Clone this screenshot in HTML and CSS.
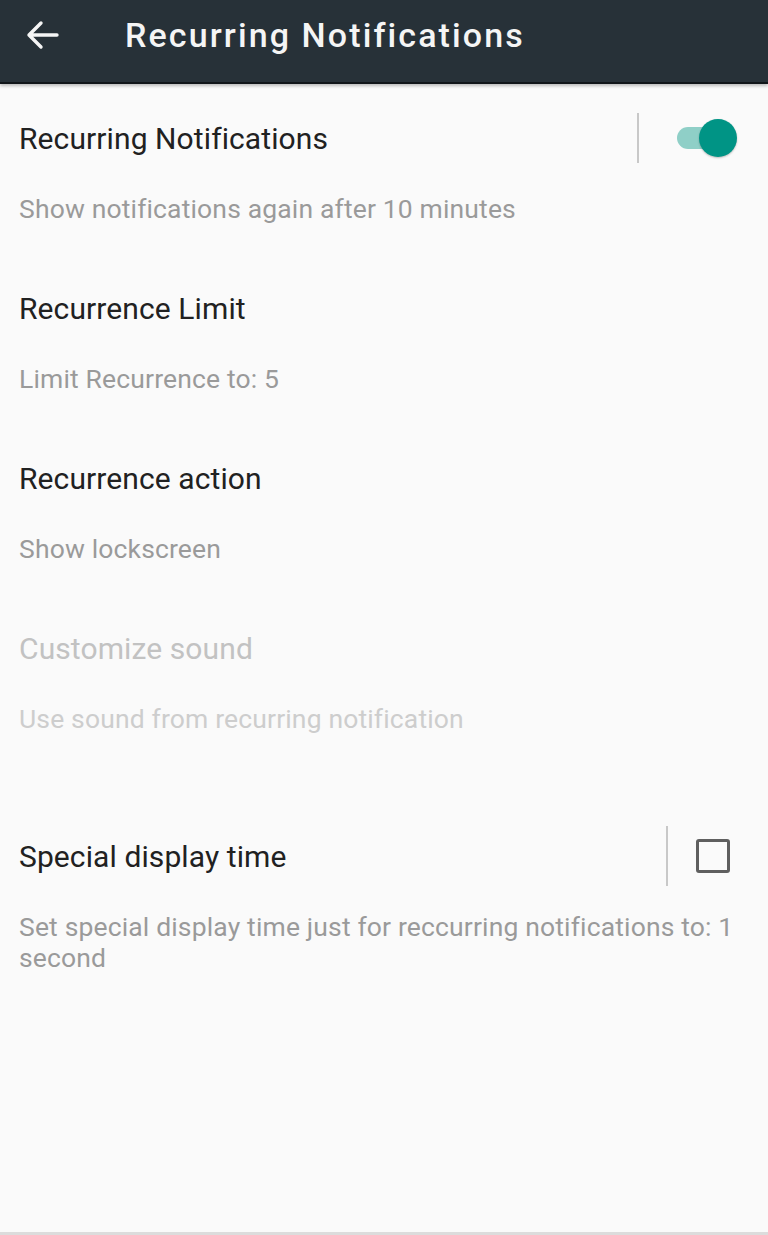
FILE: index.html
```html
<!DOCTYPE html>
<html lang="en">
<head>
  <meta charset="UTF-8" />
  <meta name="viewport" content="width=device-width, initial-scale=1.0"/>
  <title>Recurring Notifications</title>

  <link rel="stylesheet" href="styles.css">
</head>
<body>

  <header class="toolbar">
    <span class="back-btn">
      <svg width="34" height="30" viewBox="0 0 34 30">
        <path d="M32 15H4M16 3L4 15l12 12" fill="none" stroke="#f5f5f5" stroke-width="3.4" stroke-linecap="round" stroke-linejoin="round"/>
      </svg>
    </span>
    <h1 class="toolbar-title">Recurring Notifications</h1>
  </header>

  <main class="prefs">
    <div class="pref">
      <div class="pref-head">
        <div class="pref-title">Recurring Notifications</div>
        <div class="pref-widget">
          <span class="divider"></span>
          <span class="switch on"><span class="thumb"></span></span>
        </div>
      </div>
      <div class="pref-summary">Show notifications again after 10 minutes</div>
    </div>

    <div class="pref">
      <div class="pref-head">
        <div class="pref-title">Recurrence Limit</div>
      </div>
      <div class="pref-summary">Limit Recurrence to: 5</div>
    </div>

    <div class="pref">
      <div class="pref-head">
        <div class="pref-title">Recurrence action</div>
      </div>
      <div class="pref-summary">Show lockscreen</div>
    </div>

    <div class="pref disabled">
      <div class="pref-head">
        <div class="pref-title">Customize sound</div>
      </div>
      <div class="pref-summary">Use sound from recurring notification</div>
    </div>

    <div class="pref spaced">
      <div class="pref-head">
        <div class="pref-title">Special display time</div>
        <div class="pref-widget check-widget">
          <span class="divider tall"></span>
          <span class="checkbox"></span>
        </div>
      </div>
      <div class="pref-summary">Set special display time just for reccurring notifications to: 1 second</div>
    </div>
  </main>

  <div class="nav-edge"></div>

</body>
</html>
```

FILE: styles.css
```css
/* === Global === */
html, body {
  height: 100%;
}

body {
  margin: 0;
  font-family: Roboto, "Noto Sans", sans-serif;
  background-color: #fafafa;
  display: flex;
  flex-direction: column;
  overflow: hidden;
}

/* === Toolbar === */
.toolbar {
  height: 82px;
  background-color: #273138;
  border-bottom: 2px solid #11161a;
  box-shadow: 0 2px 3px rgba(0, 0, 0, 0.25);
  display: flex;
  align-items: center;
  flex-shrink: 0;
  position: relative;
  z-index: 1;
}

.back-btn {
  display: flex;
  margin-left: 25px;
  margin-top: -12px;
}

.toolbar-title {
  margin: -12px 0 0 66px;
  font-size: 34px;
  font-weight: 500;
  color: #f5f5f5;
  letter-spacing: 2.1px;
}

/* === Preference list === */
.prefs {
  flex: 1;
}

.pref {
  padding: 36px 19px 30px;
}

.pref.spaced {
  margin-top: 38px;
}

.pref-head {
  display: flex;
  align-items: center;
  height: 36px;
}

.pref-title {
  flex: 1;
  font-size: 30px;
  color: #212121;
  letter-spacing: 0.1px;
}

.pref-summary {
  margin-top: 37px;
  font-size: 26.5px;
  line-height: 31px;
  color: #9a9a9a;
  letter-spacing: 0.15px;
}

.pref.disabled .pref-title {
  color: #c2c2c2;
}

.pref.disabled .pref-summary {
  color: #cdcdcd;
}

/* === Widgets === */
.pref-widget {
  display: flex;
  align-items: center;
  margin-right: 20px;
}

.divider {
  width: 2px;
  height: 50px;
  background-color: #c8c8c8;
  margin-right: 38px;
}

.divider.tall {
  height: 60px;
  margin-right: 28px;
}

.switch {
  position: relative;
  width: 52px;
  height: 22px;
  border-radius: 11px;
  background-color: #bdbdbd;
}

.switch.on {
  background-color: #8fcfc7;
}

.switch .thumb {
  position: absolute;
  top: -8px;
  left: 0;
  width: 38px;
  height: 38px;
  border-radius: 50%;
  background-color: #fafafa;
  box-shadow: 0 1px 2px rgba(0, 0, 0, 0.25);
}

.switch.on .thumb {
  left: auto;
  right: -8px;
  background-color: #009485;
}

.check-widget {
  margin-right: 19px;
}

.checkbox {
  width: 28px;
  height: 28px;
  border: 3px solid #5f5f5f;
  border-radius: 3px;
}

/* === Bottom edge === */
.nav-edge {
  height: 3px;
  background-color: #dcdcdc;
  flex-shrink: 0;
}
```
